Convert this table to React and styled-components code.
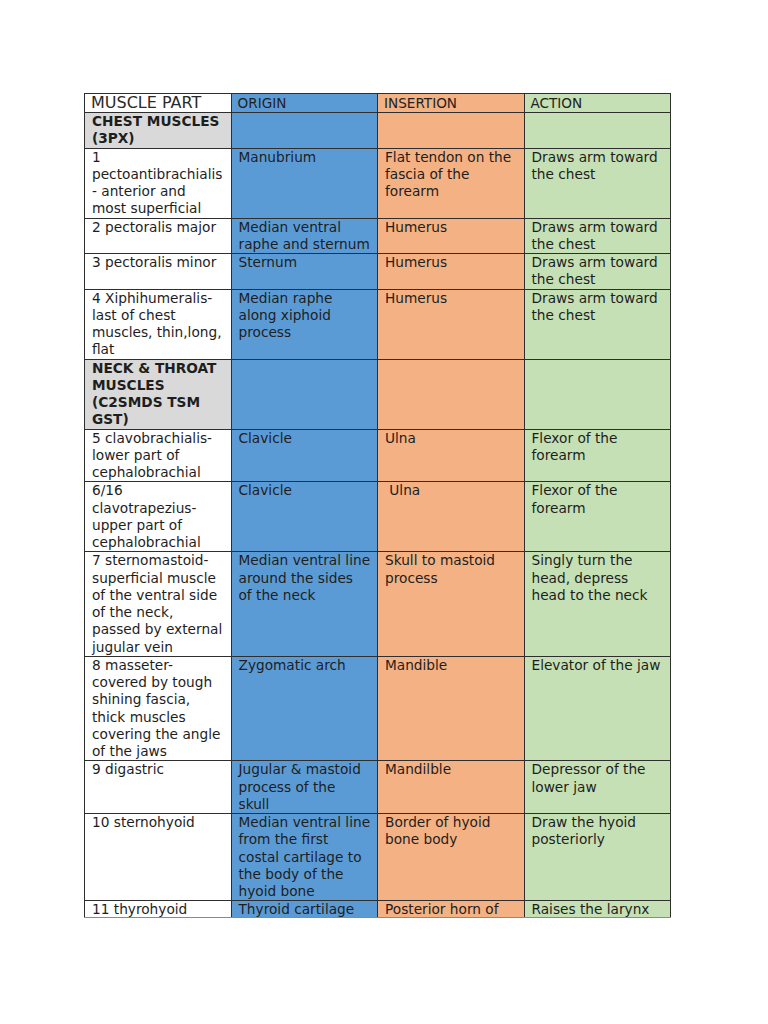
import React from "react";
import styled, { createGlobalStyle } from "styled-components";

const GlobalStyle = createGlobalStyle`
	html, body {
		margin: 0;
		padding: 0;
		background: #ffffff;
	}
	body {
		font-family: "DejaVu Sans", "Liberation Sans", sans-serif;
	}
`;

const COLORS = {
	part: "#ffffff",
	origin: "#5b9bd5",
	insertion: "#f4b183",
	action: "#c5e0b4",
};

const rows = [
	{
		section: true,
		part: ["CHEST MUSCLES", "(3PX)"],
		origin: [],
		insertion: [],
		action: [],
	},
	{
		part: ["1", "pectoantibrachialis", "- anterior and", "most superficial"],
		origin: ["Manubrium"],
		insertion: ["Flat tendon on the", "fascia of the", "forearm"],
		action: ["Draws arm toward", "the chest"],
	},
	{
		part: ["2 pectoralis major"],
		origin: ["Median ventral", "raphe and sternum"],
		insertion: ["Humerus"],
		action: ["Draws arm toward", "the chest"],
	},
	{
		part: ["3 pectoralis minor"],
		origin: ["Sternum"],
		insertion: ["Humerus"],
		action: ["Draws arm toward", "the chest"],
	},
	{
		part: ["4 Xiphihumeralis-", "last of chest", "muscles, thin,long,", "flat"],
		origin: ["Median raphe", "along xiphoid", "process"],
		insertion: ["Humerus"],
		action: ["Draws arm toward", "the chest"],
	},
	{
		section: true,
		part: ["NECK & THROAT", "MUSCLES", "(C2SMDS TSM", "GST)"],
		origin: [],
		insertion: [],
		action: [],
	},
	{
		part: ["5 clavobrachialis-", "lower part of", "cephalobrachial"],
		origin: ["Clavicle"],
		insertion: ["Ulna"],
		action: ["Flexor of the", "forearm"],
	},
	{
		part: ["6/16", "clavotrapezius-", "upper part of", "cephalobrachial"],
		origin: ["Clavicle"],
		insertion: ["\u00a0Ulna"],
		action: ["Flexor of the", "forearm"],
	},
	{
		part: [
			"7 sternomastoid-",
			"superficial muscle",
			"of the ventral side",
			"of the neck,",
			"passed by external",
			"jugular vein",
		],
		origin: ["Median ventral line", "around the sides", "of the neck"],
		insertion: ["Skull to mastoid", "process"],
		action: ["Singly turn the", "head, depress", "head to the neck"],
	},
	{
		part: [
			"8 masseter-",
			"covered by tough",
			"shining fascia,",
			"thick muscles",
			"covering the angle",
			"of the jaws",
		],
		origin: ["Zygomatic arch"],
		insertion: ["Mandible"],
		action: ["Elevator of the jaw"],
	},
	{
		part: ["9 digastric"],
		origin: ["Jugular & mastoid", "process of the", "skull"],
		insertion: ["Mandilble"],
		action: ["Depressor of the", "lower jaw"],
	},
	{
		part: ["10 sternohyoid"],
		origin: [
			"Median ventral line",
			"from the first",
			"costal cartilage to",
			"the body of the",
			"hyoid bone",
		],
		insertion: ["Border of hyoid", "bone body"],
		action: ["Draw the hyoid", "posteriorly"],
	},
	{
		part: ["11 thyrohyoid"],
		origin: ["Thyroid cartilage"],
		insertion: ["Posterior horn of"],
		action: ["Raises the larynx"],
	},
];

export default function App() {
	return (
		<>
			<GlobalStyle />
			<Page>
				<Sheet>
					<Table>
						<colgroup>
							<Col />
							<Col />
							<Col />
							<Col />
						</colgroup>
						<thead>
							<tr>
								<HeadCell $col="part" $big>MUSCLE PART</HeadCell>
								<HeadCell $col="origin">ORIGIN</HeadCell>
								<HeadCell $col="insertion">INSERTION</HeadCell>
								<HeadCell $col="action">ACTION</HeadCell>
							</tr>
						</thead>
						<tbody>
							{rows.map((row, i) => (
								<tr key={i}>
									{["part", "origin", "insertion", "action"].map((key) => (
										<Cell key={key} $col={key} $section={row.section && key === "part"}>
											{row[key].map((line, j) => (
												<Line key={j}>{line}</Line>
											))}
										</Cell>
									))}
								</tr>
							))}
						</tbody>
					</Table>
				</Sheet>
			</Page>
		</>
	);
}

const Page = styled.div`
	width: 768px;
	height: 1024px;
	padding: 93px 0 0 84px;
	box-sizing: border-box;
	background: #ffffff;
`;

const Sheet = styled.div`
	position: relative;
	width: 587px;
	height: 825px;
	overflow: hidden;

	&::after {
		content: "";
		position: absolute;
		left: 0;
		right: 0;
		bottom: 0;
		height: 1px;
		background: #8a8a8a;
	}
`;

const Table = styled.table`
	border-collapse: collapse;
	table-layout: fixed;
	width: 587px;
	color: #1e1e1e;
`;

const Col = styled.col`
	width: 146px;
`;

const HeadCell = styled.th`
	border: 1px solid #2e2e2e;
	background: ${({ $col }) => COLORS[$col]};
	font-weight: normal;
	text-align: left;
	vertical-align: top;
	padding: 0 6px;
	height: 18px;
	font-size: ${({ $big }) => ($big ? "16px" : "13.6px")};
	line-height: 18px;
	white-space: nowrap;
	color: ${({ $big }) => ($big ? "#2a2a2a" : "#222222")};
`;

const Cell = styled.td`
	border: 1px solid #2e2e2e;
	background: ${({ $col, $section }) => ($section ? "#d9d9d9" : COLORS[$col])};
	font-weight: ${({ $section }) => ($section ? "bold" : "normal")};
	vertical-align: top;
	padding: 0 6px 0 7px;
	font-size: 13.7px;
	line-height: 17.25px;
	min-height: 17.25px;
`;

const Line = styled.div`
	white-space: pre;
	height: 17.25px;
`;
